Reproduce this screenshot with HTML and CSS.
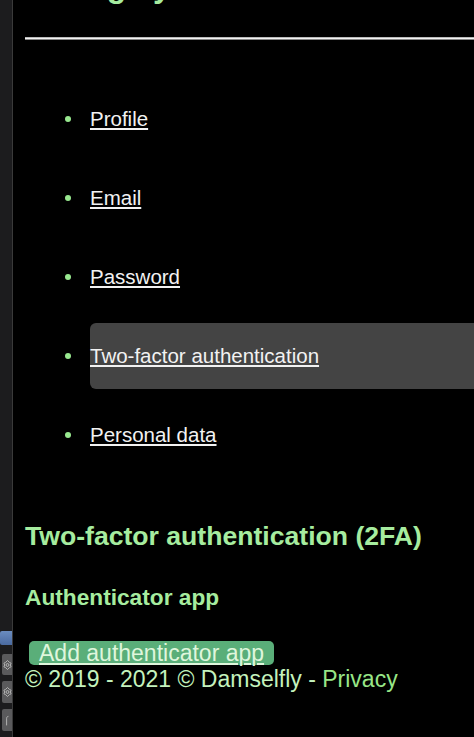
FILE: index.html
```html
<!DOCTYPE html>
<html lang="en">
  <head>
    <meta charset="UTF-8" />
    <meta name="viewport" content="width=device-width, initial-scale=1.0" />
    <title>Manage your account - Damselfly</title>
    <link rel="stylesheet" href="styles.css">
  </head>
  <body>
    <!-- Barra lateral de la otra ventana -->
    <aside class="dock">
      <div class="dock-item dock-blue"></div>
      <div class="dock-item">
        <svg width="10" height="14" viewBox="0 0 10 14">
          <path d="M5 2 L7 4 L9 5 L8 7 L9 9 L7 10 L5 12 L3 10 L1 9 L2 7 L1 5 L3 4 Z" fill="none" stroke="#bbb" stroke-width="1" />
          <circle cx="5" cy="7" r="1.6" fill="none" stroke="#bbb" stroke-width="1" />
        </svg>
      </div>
      <div class="dock-item">
        <svg width="10" height="14" viewBox="0 0 10 14">
          <path d="M5 2 L7 4 L9 5 L8 7 L9 9 L7 10 L5 12 L3 10 L1 9 L2 7 L1 5 L3 4 Z" fill="none" stroke="#bbb" stroke-width="1" />
          <circle cx="5" cy="7" r="1.6" fill="none" stroke="#bbb" stroke-width="1" />
        </svg>
      </div>
      <div class="dock-item">
        <svg width="10" height="14" viewBox="0 0 10 14">
          <path d="M6 3 C4 3 4 5 4 6 L4 13" fill="none" stroke="#bbb" stroke-width="1" />
        </svg>
      </div>
    </aside>

    <main class="page">
      <h1>Manage your account</h1>
      <hr class="rule" />

      <ul class="account-nav">
        <li><a href="#">Profile</a></li>
        <li><a href="#">Email</a></li>
        <li><a href="#">Password</a></li>
        <li><a href="#" class="active">Two-factor authentication</a></li>
        <li><a href="#">Personal data</a></li>
      </ul>

      <h2>Two-factor authentication (2FA)</h2>
      <h3>Authenticator app</h3>
      <a href="#" class="btn">Add authenticator app</a>

      <footer class="footer">
        &copy; 2019 - 2021 &copy; Damselfly - <a href="#">Privacy</a>
      </footer>
    </main>
  </body>
</html>
```

FILE: styles.css
```css
html,
body {
  margin: 0;
  padding: 0;
  height: 100%;
}

body {
  font-family: "Liberation Sans", Arial, sans-serif;
  background-color: #000;
  color: #eee;
  display: flex;
  overflow: hidden;
}

/* Barra lateral */
.dock {
  width: 13px;
  flex-shrink: 0;
  background-color: #1c1c1e;
  border-right: 1px solid #3a3a3a;
  display: flex;
  flex-direction: column;
  align-items: flex-end;
  padding-top: 631px;
  box-sizing: border-box;
}

.dock-item {
  width: 10px;
  height: 27px;
  background-color: #5a5a5c;
  border-radius: 2px 0 0 2px;
  margin-bottom: 6px;
  overflow: hidden;
  display: flex;
  align-items: center;
}

.dock-item svg {
  margin-left: 1px;
}

.dock-blue {
  width: 12px;
  height: 17px;
  background: linear-gradient(#6a8cc0, #4a6aa0);
  margin-bottom: 9px;
}

/* Contenido */
.page {
  flex: 1;
  padding-left: 12px;
}

h1 {
  color: #a6ec9f;
  font-size: 32px;
  line-height: 37px;
  margin: -32px 0 0;
}

.rule {
  margin: 32px 0 0;
  border: 0;
  border-top: 1px solid #bbb;
  border-bottom: 1px solid #888;
  height: 1px;
  background-color: #f2f2f2;
}

/* Menú de la cuenta */
.account-nav {
  list-style: none;
  margin: 46px 0 53px;
  padding-left: 40px;
  font-size: 20.5px;
}

.account-nav li {
  display: flex;
  align-items: center;
}

.account-nav li::before {
  content: "";
  flex-shrink: 0;
  width: 6px;
  height: 6px;
  border-radius: 50%;
  background-color: #98e88f;
  margin-right: 19px;
}

.account-nav li + li {
  margin-top: 13px;
}

.account-nav a {
  flex: 1;
  color: #f2f2f2;
  line-height: 22px;
  padding: 22px 0;
  border-radius: 6px 0 0 6px;
}

.account-nav a.active {
  background-color: #444;
}

h2 {
  color: #a6ec9f;
  font-size: 26.6px;
  line-height: 30px;
  margin: 0 0 33px;
}

h3 {
  color: #a6ec9f;
  font-size: 22.7px;
  line-height: 26px;
  margin: 0 0 31px;
}

.btn {
  display: block;
  width: fit-content;
  margin-left: 4px;
  height: 24px;
  line-height: 24px;
  padding: 0 10px;
  font-size: 23px;
  background-color: #5aae79;
  color: #dff6dc;
  border-radius: 5px;
}

.footer {
  font-size: 23px;
  line-height: 28px;
  color: #c4f2bd;
}

.footer a {
  color: #98e687;
  text-decoration: none;
}
```
